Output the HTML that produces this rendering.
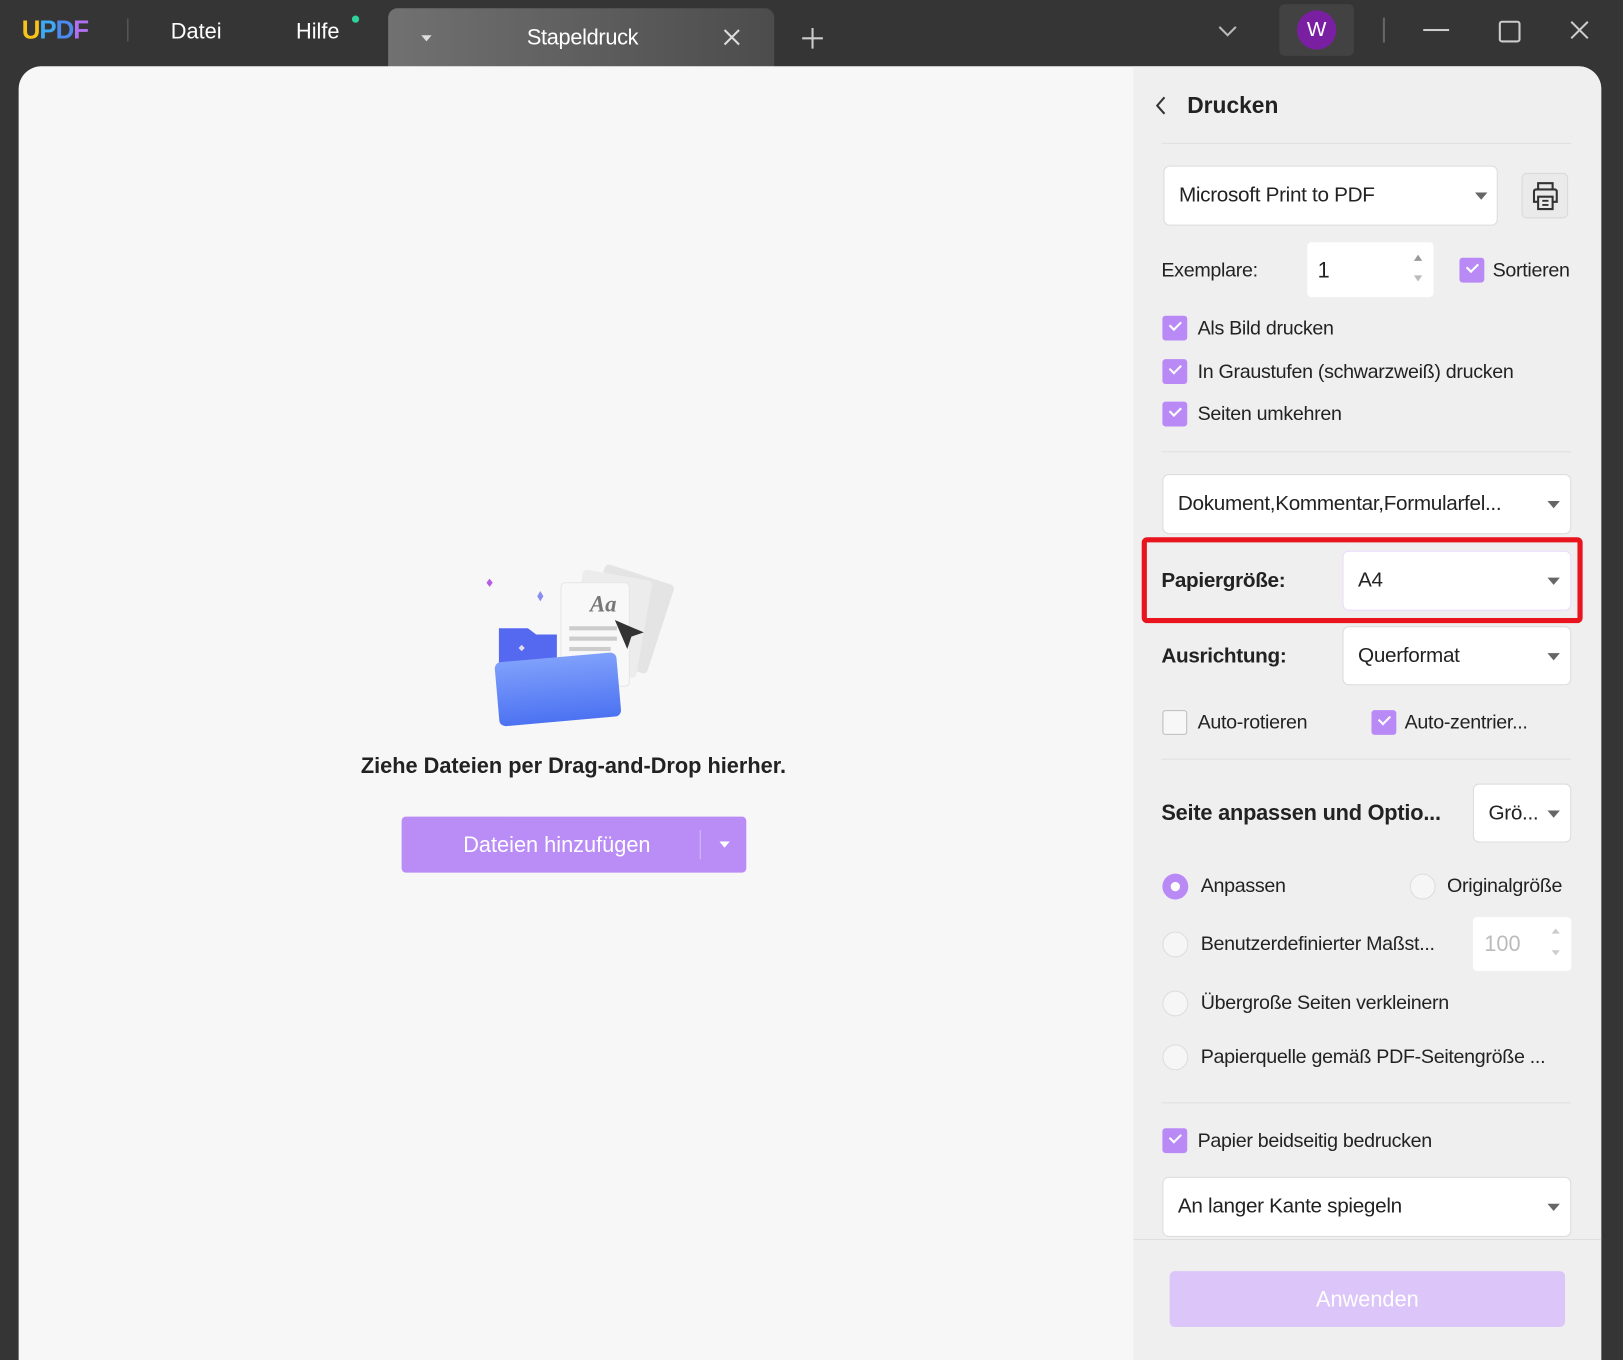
<!DOCTYPE html>
<html><head><meta charset="utf-8"><style>
html,body{margin:0;padding:0;width:1623px;height:1346px;overflow:hidden;background:#353535}
#w{position:absolute;left:0;top:0;width:1568px;height:1300px;transform:scale(1.03508);transform-origin:0 0;font-family:"Liberation Sans",sans-serif;color:#222}
.a{position:absolute}
.t{position:absolute;white-space:nowrap;line-height:1}
.sel{position:absolute;background:#fff;border:1px solid #dcdcdc;border-radius:6px;box-sizing:border-box}
.sel .tx{position:absolute;left:14px;top:50%;transform:translateY(-50%);font-size:20px;letter-spacing:-0.3px;color:#222;white-space:nowrap}
.arr{position:absolute;right:10px;top:50%;margin-top:-3px;width:0;height:0;border-left:6px solid transparent;border-right:6px solid transparent;border-top:7px solid #666}
.cb{position:absolute;width:24px;height:24px;border-radius:3px;background:#b98af6;box-sizing:border-box}
.cb:after{content:"";position:absolute;left:7px;top:5px;width:9px;height:5px;border-left:2px solid #fff;border-bottom:2px solid #fff;transform:rotate(-45deg)}
.cbu{position:absolute;width:24px;height:24px;border-radius:3px;border:1.5px solid #bdbdbd;background:#f7f7f7;box-sizing:border-box}
.rd{position:absolute;width:25px;height:25px;border-radius:50%;border:1.5px solid #ddd;background:#f6f6f6;box-sizing:border-box}
.lbl{font-size:19px;letter-spacing:-0.3px;color:#222}
.sep{position:absolute;left:1122px;width:396px;height:1px;background:#e0e0e0}
</style></head><body><div id="w">
<div class="t" style="left:21px;top:17px;font-size:25px;font-weight:bold;letter-spacing:-1px"><span style="color:#f7c21a">U</span><span style="color:#3fa9f5">P</span><span style="color:#4d8af0">D</span><span style="color:#b070f0">F</span></div>
<div class="a" style="left:123px;top:18px;width:1px;height:22px;background:#666"></div>
<div class="t" style="left:165px;top:20px;font-size:21px;color:#fff">Datei</div>
<div class="t" style="left:286px;top:20px;font-size:21px;color:#fff">Hilfe</div>
<div class="a" style="left:340px;top:15px;width:7px;height:7px;border-radius:50%;background:#2fd39a"></div>
<div class="a" style="left:375px;top:8px;width:373px;height:60px;border-radius:9px 9px 0 0;background:linear-gradient(90deg,#717171,#4c4c4c)"></div>
<div class="a" style="left:407px;top:34px;border-left:5px solid transparent;border-right:5px solid transparent;border-top:6px solid #ddd"></div>
<div class="t" style="left:509px;top:26px;font-size:21px;letter-spacing:-0.3px;color:#fff">Stapeldruck</div>
<svg class="a" style="left:698px;top:27px" width="18" height="18"><path d="M2 2L16 16M16 2L2 16" stroke="#ddd" stroke-width="2"/></svg>
<svg class="a" style="left:774px;top:26px" width="22" height="22"><path d="M11 1V21M1 11H21" stroke="#ccc" stroke-width="2"/></svg>
<svg class="a" style="left:1176px;top:24px" width="20" height="12"><path d="M2 2L10 10L18 2" stroke="#bbb" stroke-width="2" fill="none"/></svg>
<div class="a" style="left:1236px;top:4px;width:72px;height:50px;border-radius:5px;background:#424242"></div>
<div class="a" style="left:1253px;top:10px;width:38px;height:38px;border-radius:50%;background:#7b1fa2;color:#fff;font-size:20px;text-align:center;line-height:38px">W</div>
<div class="a" style="left:1336px;top:17px;width:2px;height:24px;background:#666"></div>
<div class="a" style="left:1375px;top:28px;width:25px;height:2px;background:#ccc"></div>
<div class="a" style="left:1448px;top:20px;width:17px;height:17px;border:2px solid #ccc;border-radius:3px"></div>
<svg class="a" style="left:1516px;top:19px" width="20" height="20"><path d="M2 2L18 18M18 2L2 18" stroke="#ccc" stroke-width="2"/></svg>
<div class="a" style="left:18px;top:64px;width:1529px;height:1250px;border-radius:22px 22px 0 0;background:#f7f7f7;overflow:hidden">
 <div class="a" style="left:1077px;top:0;width:452px;height:1250px;background:#efefef"></div>
 <div class="a" style="left:1077px;top:1133px;width:452px;height:1px;background:#dedede"></div>
</div>
<svg class="a" style="left:460px;top:535px" width="200" height="175" viewBox="0 0 200 175">
 <defs><linearGradient id="g" x1="0" y1="0" x2="0" y2="1"><stop offset="0" stop-color="#7fa0fb"/><stop offset="1" stop-color="#4c72f2"/></linearGradient></defs>
 <path d="M13 24l3 4-3 4-3-4z" fill="#b55be6"/>
 <path d="M62 36l3 5 -3 5-3-5z" fill="#8a8cf0"/>
 <rect x="110" y="18" width="70" height="90" rx="4" fill="#e4e4e4" transform="rotate(18 145 63)"/>
 <rect x="95" y="20" width="68" height="95" rx="4" fill="#ececec" transform="rotate(10 129 67)"/>
 <rect x="82" y="28" width="66" height="100" rx="4" fill="#f8f8f8" stroke="#e6e6e6"/>
 <text x="110" y="56" font-size="22" font-style="italic" font-weight="bold" fill="#777" font-family="Liberation Serif, serif">Aa</text>
 <rect x="90" y="70" width="46" height="4" fill="#ccc"/><rect x="90" y="80" width="46" height="4" fill="#ccc"/><rect x="90" y="90" width="40" height="4" fill="#ccc"/>
 <path d="M134 64L162 76L150 80L146 92Z" fill="#333"/>
 <path d="M22 72h28l8 6h20v50H22z" fill="#5568f0"/>
 <path d="M44 88l3 3-3 3-3-3z" fill="#dde"/>
 <rect x="20" y="100" width="118" height="62" rx="6" fill="url(#g)" transform="rotate(-5 79 131)"/>
</svg>
<div class="t" style="left:0;width:1108px;text-align:center;top:730px;font-size:21px;font-weight:bold;color:#222">Ziehe Dateien per Drag-and-Drop hierher.</div>
<div class="a" style="left:388px;top:789px;width:333px;height:54px;border-radius:4px;background:#b98cf6"></div>
<div class="t" style="left:388px;width:300px;text-align:center;top:806px;font-size:21px;color:#fff">Dateien hinzufügen</div>
<div class="a" style="left:676px;top:802px;width:1px;height:28px;background:#d6bdfb"></div>
<div class="a" style="left:695px;top:813px;border-left:5px solid transparent;border-right:5px solid transparent;border-top:6px solid #fff"></div>
<svg class="a" style="left:1116px;top:92px" width="12" height="20"><path d="M9 2L2 10L9 18" stroke="#333" stroke-width="2" fill="none"/></svg>
<div class="t" style="left:1147px;top:91px;font-size:22px;font-weight:bold">Drucken</div>
<div class="sep" style="top:138px"></div>
<div class="sel" style="left:1124px;top:160px;width:323px;height:58px"><span class="tx">Microsoft Print to PDF</span><span class="arr" style="right:9px"></span></div>
<div class="a" style="left:1470px;top:167px;width:45px;height:44px;border:1px solid #d8d8d8;border-radius:5px;background:#eaeaea;box-sizing:border-box"></div>
<svg class="a" style="left:1478px;top:173px" width="30" height="32" viewBox="0 0 30 32"><path d="M8 10V4h14v6M8 22H4V12a2 2 0 0 1 2-2h18a2 2 0 0 1 2 2v10h-4M8 17h14v12H8z" stroke="#333" stroke-width="2" fill="none"/><path d="M12 21h6M12 25h6" stroke="#333" stroke-width="1.8"/></svg>
<div class="t lbl" style="left:1122px;top:252px">Exemplare:</div>
<div class="a" style="left:1263px;top:234px;width:122px;height:53px;background:#fff;border-radius:4px"></div>
<div class="t" style="left:1273px;top:251px;font-size:21px">1</div>
<div class="a" style="left:1366px;top:246px;border-left:4px solid transparent;border-right:4px solid transparent;border-bottom:6px solid #999"></div>
<div class="a" style="left:1366px;top:266px;border-left:4px solid transparent;border-right:4px solid transparent;border-top:6px solid #bbb"></div>
<div class="cb" style="left:1410px;top:249px"></div>
<div class="t lbl" style="left:1442px;top:252px">Sortieren</div>
<div class="cb" style="left:1123px;top:305px"></div><div class="t lbl" style="left:1157px;top:308px">Als Bild drucken</div>
<div class="cb" style="left:1123px;top:347px"></div><div class="t lbl" style="left:1157px;top:350px">In Graustufen (schwarzweiß) drucken</div>
<div class="cb" style="left:1123px;top:388px"></div><div class="t lbl" style="left:1157px;top:391px">Seiten umkehren</div>
<div class="sep" style="top:436px"></div>
<div class="sel" style="left:1123px;top:458px;width:395px;height:58px"><span class="tx">Dokument,Kommentar,Formularfel...</span><span class="arr"></span></div>
<div class="a" style="left:1103px;top:519px;width:426px;height:83px;border:5px solid #e8141e;border-radius:5px;box-sizing:border-box"></div>
<div class="t" style="left:1122px;top:551px;font-size:20px;font-weight:bold;letter-spacing:-0.3px">Papiergröße:</div>
<div class="sel" style="left:1297px;top:532px;width:221px;height:58px;border-color:#eadcfb"><span class="tx">A4</span><span class="arr"></span></div>
<div class="t" style="left:1122px;top:624px;font-size:20px;font-weight:bold;letter-spacing:-0.3px">Ausrichtung:</div>
<div class="sel" style="left:1297px;top:605px;width:221px;height:57px"><span class="tx">Querformat</span><span class="arr"></span></div>
<div class="cbu" style="left:1123px;top:686px"></div><div class="t lbl" style="left:1157px;top:689px">Auto-rotieren</div>
<div class="cb" style="left:1325px;top:686px"></div><div class="t lbl" style="left:1357px;top:689px">Auto-zentrier...</div>
<div class="sep" style="top:733px"></div>
<div class="t" style="left:1122px;top:775px;font-size:21px;font-weight:bold;letter-spacing:-0.2px">Seite anpassen und Optio...</div>
<div class="sel" style="left:1423px;top:757px;width:95px;height:57px"><span class="tx">Grö...</span><span class="arr"></span></div>
<div class="a" style="left:1123px;top:844px;width:25px;height:25px;border-radius:50%;background:#b98af6"><div class="a" style="left:8px;top:8px;width:9px;height:9px;border-radius:50%;background:#fff"></div></div>
<div class="t lbl" style="left:1160px;top:847px">Anpassen</div>
<div class="rd" style="left:1362px;top:844px"></div><div class="t lbl" style="left:1398px;top:847px">Originalgröße</div>
<div class="rd" style="left:1123px;top:900px"></div><div class="t lbl" style="left:1160px;top:903px">Benutzerdefinierter Maßst...</div>
<div class="a" style="left:1423px;top:886px;width:95px;height:52px;background:#fff;border-radius:4px"></div>
<div class="t" style="left:1434px;top:902px;font-size:21px;color:#bbb">100</div>
<div class="a" style="left:1499px;top:897px;border-left:4px solid transparent;border-right:4px solid transparent;border-bottom:5px solid #ccc"></div>
<div class="a" style="left:1499px;top:918px;border-left:4px solid transparent;border-right:4px solid transparent;border-top:5px solid #ccc"></div>
<div class="rd" style="left:1123px;top:957px"></div><div class="t lbl" style="left:1160px;top:960px">Übergroße Seiten verkleinern</div>
<div class="rd" style="left:1123px;top:1009px"></div><div class="t lbl" style="left:1160px;top:1012px">Papierquelle gemäß PDF-Seitengröße ...</div>
<div class="sep" style="top:1065px"></div>
<div class="cb" style="left:1123px;top:1090px"></div><div class="t lbl" style="left:1157px;top:1093px">Papier beidseitig bedrucken</div>
<div class="sel" style="left:1123px;top:1137px;width:395px;height:58px"><span class="tx">An langer Kante spiegeln</span><span class="arr"></span></div>
<div class="a" style="left:1130px;top:1228px;width:382px;height:54px;border-radius:5px;background:#dcc5f8"></div>
<div class="t" style="left:1130px;width:382px;text-align:center;top:1245px;font-size:21px;color:#fff">Anwenden</div>
</div></body></html>
